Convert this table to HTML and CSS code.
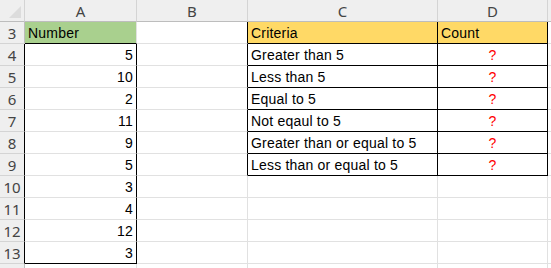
FILE: index.html
```html
<!DOCTYPE html>
<html lang="en">
<head>
    <meta charset="UTF-8">
    <title>Sheet1</title>
    <link rel="stylesheet" href="styles.css">
</head>
<body>
    <div class="sheet">
        <!-- column headers -->
        <div class="corner"><span class="tri"></span></div>
        <div class="col-head">A</div>
        <div class="col-head">B</div>
        <div class="col-head">C</div>
        <div class="col-head">D</div>
        <div class="col-head last"></div>

        <!-- row 3 -->
        <div class="row-head">3</div>
        <div class="cell green b-bottom">Number</div>
        <div class="cell b-right"></div>
        <div class="cell yellow b-right b-bottom">Criteria</div>
        <div class="cell yellow b-right b-bottom">Count</div>
        <div class="cell"></div>

        <div class="row-head edge">4</div>
        <div class="cell num b-right">5</div>
        <div class="cell b-right"></div>
        <div class="cell b-right b-bottom">Greater than 5</div>
        <div class="cell q b-right b-bottom">?</div>
        <div class="cell"></div>

        <div class="row-head edge">5</div>
        <div class="cell num b-right">10</div>
        <div class="cell b-right"></div>
        <div class="cell b-right b-bottom">Less than 5</div>
        <div class="cell q b-right b-bottom">?</div>
        <div class="cell"></div>

        <div class="row-head edge">6</div>
        <div class="cell num b-right">2</div>
        <div class="cell b-right"></div>
        <div class="cell b-right b-bottom">Equal to 5</div>
        <div class="cell q b-right b-bottom">?</div>
        <div class="cell"></div>

        <div class="row-head edge">7</div>
        <div class="cell num b-right">11</div>
        <div class="cell b-right"></div>
        <div class="cell b-right b-bottom">Not eqaul to 5</div>
        <div class="cell q b-right b-bottom">?</div>
        <div class="cell"></div>

        <div class="row-head edge">8</div>
        <div class="cell num b-right">9</div>
        <div class="cell b-right"></div>
        <div class="cell b-right b-bottom">Greater than or equal to 5</div>
        <div class="cell q b-right b-bottom">?</div>
        <div class="cell"></div>

        <div class="row-head edge">9</div>
        <div class="cell num b-right">5</div>
        <div class="cell b-right"></div>
        <div class="cell b-right b-bottom">Less than or equal to 5</div>
        <div class="cell q b-right b-bottom">?</div>
        <div class="cell"></div>

        <div class="row-head edge">10</div>
        <div class="cell num b-right">3</div>
        <div class="cell"></div>
        <div class="cell"></div>
        <div class="cell"></div>
        <div class="cell"></div>

        <div class="row-head edge">11</div>
        <div class="cell num b-right">4</div>
        <div class="cell"></div>
        <div class="cell"></div>
        <div class="cell"></div>
        <div class="cell"></div>

        <div class="row-head edge">12</div>
        <div class="cell num b-right">12</div>
        <div class="cell"></div>
        <div class="cell"></div>
        <div class="cell"></div>
        <div class="cell"></div>

        <div class="row-head edge">13</div>
        <div class="cell num b-right b-bottom">3</div>
        <div class="cell"></div>
        <div class="cell"></div>
        <div class="cell"></div>
        <div class="cell"></div>

        <div class="row-head"></div>
        <div class="cell"></div>
        <div class="cell"></div>
        <div class="cell"></div>
        <div class="cell"></div>
        <div class="cell"></div>
    </div>
</body>
</html>
```

FILE: styles.css
```css
body {
    margin: 0;
    background-color: #fff;
    font-family: 'Liberation Sans', Arial, sans-serif;
    overflow: hidden;
}
.sheet {
    display: grid;
    grid-template-columns: 25px 112px 111px 190px 110px 1fr;
    grid-auto-rows: 22px;
}
.sheet > div {
    box-sizing: border-box;
    border-right: 1px solid #e1e1e1;
    border-bottom: 1px solid #e1e1e1;
}
.corner,
.col-head,
.row-head {
    background-color: #efefef;
    color: #444;
    font-family: 'Noto Sans', sans-serif;
    font-size: 15px;
    display: flex;
    align-items: center;
    justify-content: center;
}
.sheet > .corner,
.sheet > .col-head {
    border-right-color: #d4d4d4;
    border-bottom-color: #bdbdbd;
}
.sheet > .row-head {
    border-right-color: #bdbdbd;
    border-bottom-color: #d4d4d4;
}
.corner {
    position: relative;
}
.tri {
    position: absolute;
    right: 3px;
    bottom: 3px;
    width: 0;
    height: 0;
    border-left: 12px solid transparent;
    border-bottom: 12px solid #dcdcdc;
}
.cell {
    font-size: 14px;
    letter-spacing: 0.2px;
    color: #000;
    padding: 0 3px 2px;
    display: flex;
    align-items: flex-end;
    white-space: nowrap;
}
.num {
    justify-content: flex-end;
}
.q {
    justify-content: center;
    color: #ff0000;
}
.green {
    background-color: #a9d08e;
}
.yellow {
    background-color: #ffd966;
}
.sheet > .b-right,
.sheet > .row-head.edge {
    border-right-color: #000;
}
.sheet > .b-bottom {
    border-bottom-color: #000;
}
```
